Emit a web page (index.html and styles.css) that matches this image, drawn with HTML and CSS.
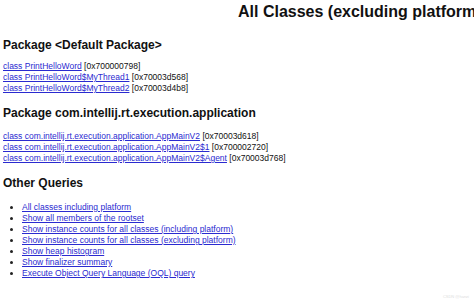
FILE: index.html
```html
<!DOCTYPE html>
<html lang="en">
<head>
    <meta charset="UTF-8">
    <title>All Classes (excluding platform)</title>
    <link rel="stylesheet" href="styles.css">
</head>
<body>
<div class="page">

    <h1 class="title">All Classes (excluding platform)</h1>

    <h2>Package &lt;Default Package&gt;</h2>
    <div class="classes">
        <a href="#">class PrintHelloWord</a> [0x700000798]<br>
        <a href="#">class PrintHelloWord$MyThread1</a> [0x70003d568]<br>
        <a href="#">class PrintHelloWord$MyThread2</a> [0x70003d4b8]<br>
    </div>

    <h2>Package com.intellij.rt.execution.application</h2>
    <div class="classes second">
        <a href="#">class com.intellij.rt.execution.application.AppMainV2</a> [0x70003d618]<br>
        <a href="#">class com.intellij.rt.execution.application.AppMainV2$1</a> [0x700002720]<br>
        <a href="#">class com.intellij.rt.execution.application.AppMainV2$Agent</a> [0x70003d768]<br>
    </div>

    <h2>Other Queries</h2>
    <ul class="queries">
        <li><a href="#">All classes including platform</a></li>
        <li><a href="#">Show all members of the rootset</a></li>
        <li><a href="#">Show instance counts for all classes (including platform)</a></li>
        <li><a href="#">Show instance counts for all classes (excluding platform)</a></li>
        <li><a href="#">Show heap histogram</a></li>
        <li><a href="#">Show finalizer summary</a></li>
        <li><a href="#">Execute Object Query Language (OQL) query</a></li>
    </ul>

</div>
<div class="mark">CSDN @hanzi</div>
</body>
</html>
```

FILE: styles.css
```css
html, body {
    margin: 0;
    overflow: hidden;
}
body {
    font-family: "Liberation Sans", Arial, sans-serif;
    color: #111;
    background: #fff;
}
.page {
    width: 800px;
    padding: 0 3px;
}
.title {
    font-size: 16px;
    font-weight: bold;
    white-space: nowrap;
    margin: 0;
    padding-left: 235px;
    line-height: 24px;
}
h2 {
    font-size: 12px;
    font-weight: bold;
    margin: 10px 0 0 0;
    line-height: 18px;
}
.title + h2 {
    margin-top: 12px;
}
.classes {
    font-size: 8.5px;
    line-height: 11px;
    margin-top: 7px;
}
.classes.second {
    margin-top: 9px;
}
a {
    color: #2a2ad0;
}
.queries {
    font-size: 8.5px;
    line-height: 11px;
    margin: 10px 0 0 0;
    padding-left: 19px;
}
.queries li::marker {
    color: #222;
}
.mark {
    position: absolute;
    right: 5px;
    bottom: 3px;
    font-size: 4px;
    color: #ddd;
}
```
